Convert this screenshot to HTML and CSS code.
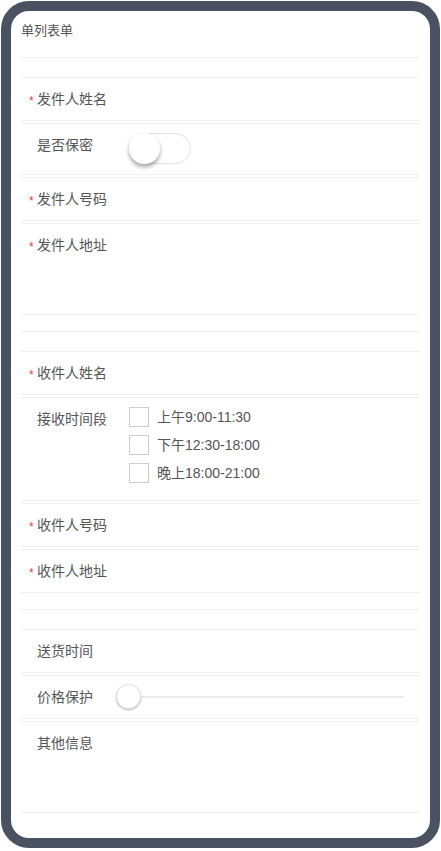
FILE: index.html
```html
<!DOCTYPE html>
<html lang="zh-CN">
<head>
<meta charset="utf-8">
<title>单列表单</title>
<link rel="stylesheet" href="styles.css">
</head>
<body>
<div class="frame">
  <div class="screen">
    <div class="title">单列表单</div>
    <div class="blank blank-lg"></div>

    <div class="item">
      <div class="label"><span class="req">*</span>发件人姓名</div>
    </div>
    <div class="item item-switch">
      <div class="label"><span class="req"></span>是否保密</div>
      <div class="control"><span class="switch"><span class="knob"></span></span></div>
    </div>
    <div class="item">
      <div class="label"><span class="req">*</span>发件人号码</div>
    </div>
    <div class="item item-area">
      <div class="label"><span class="req">*</span>发件人地址</div>
    </div>

    <div class="blank blank-sm"></div>
    <div class="blank blank-lg"></div>

    <div class="item">
      <div class="label"><span class="req">*</span>收件人姓名</div>
    </div>
    <div class="item item-check">
      <div class="label"><span class="req"></span>接收时间段</div>
      <div class="control options">
        <label class="opt"><span class="box"></span>上午9:00-11:30</label>
        <label class="opt"><span class="box"></span>下午12:30-18:00</label>
        <label class="opt"><span class="box"></span>晚上18:00-21:00</label>
      </div>
    </div>
    <div class="item">
      <div class="label"><span class="req">*</span>收件人号码</div>
    </div>
    <div class="item">
      <div class="label"><span class="req">*</span>收件人地址</div>
    </div>

    <div class="blank blank-sm"></div>
    <div class="blank blank-lg"></div>

    <div class="item">
      <div class="label"><span class="req"></span>送货时间</div>
    </div>
    <div class="item item-slider">
      <div class="label"><span class="req"></span>价格保护</div>
      <div class="slider"><span class="track"></span><span class="thumb"></span></div>
    </div>
    <div class="item item-area">
      <div class="label"><span class="req"></span>其他信息</div>
    </div>
  </div>
</div>
</body>
</html>
```
FILE: styles.css
```css
* { box-sizing: border-box; }
html, body { margin: 0; padding: 0; background: #ffffff; }
body {
  font-family: "Liberation Sans", "Noto Sans CJK SC", sans-serif;
  color: #555555;
}
.frame {
  margin: 1px;
  width: 439px;
  height: 847px;
  border: 10px solid #4a5161;
  border-radius: 28px;
  background: #ffffff;
  overflow: hidden;
}
.screen {
  padding: 0 10px;
}
.title {
  padding: 10px 0 17px;
  line-height: 19px;
  font-size: 13px;
  color: #555555;
  border-bottom: 1px solid #f0f0f0;
}
.blank { border-bottom: 1px solid #f0f0f0; }
.blank-lg { height: 20px; }
.blank-sm { height: 17px; }

.item {
  display: flex;
  align-items: flex-start;
  min-height: 43px;
  border-bottom: 1px solid #f0f0f0;
}
.item + .item {
  margin-top: 2px;
  border-top: 1px solid #f0f0f0;
  min-height: 44px;
}
.label {
  flex: 0 0 108px;
  display: flex;
  padding: 11px 0 0 8px;
  line-height: 20px;
  font-size: 14px;
  color: #555555;
}
.req {
  flex: 0 0 8px;
  color: #e8394d;
  font-size: 12px;
  line-height: 20px;
  padding-top: 2px;
}
.control { padding-top: 9px; }

.item-switch { min-height: 52px !important; }
.switch {
  display: block;
  width: 62px;
  height: 31px;
  border: 1px solid #e2e2e2;
  border-radius: 16px;
  background: #ffffff;
  position: relative;
}
.knob {
  position: absolute;
  left: -1px;
  top: -1px;
  width: 31px;
  height: 31px;
  border-radius: 50%;
  background: #ffffff;
  box-shadow: 0 3px 4px rgba(0, 0, 0, 0.35);
}

.item-area { min-height: 92px !important; }

.item-check { min-height: 104px !important; }
.options {
  display: flex;
  flex-direction: column;
  gap: 8px;
  padding-bottom: 16px;
  font-size: 14px;
}
.opt {
  display: flex;
  align-items: center;
  height: 20px;
  line-height: 20px;
  color: #555555;
}
.box {
  width: 20px;
  height: 20px;
  border: 1px solid #cccccc;
  background: #ffffff;
  margin-right: 8px;
}

.item-slider { align-items: center; }
.item-slider .label { padding-top: 0; }
.slider {
  flex: 1;
  position: relative;
  height: 26px;
  margin-right: 16px;
  display: flex;
  align-items: center;
}
.track {
  display: block;
  width: 100%;
  height: 2px;
  background: #e9e9f0;
}
.thumb {
  position: absolute;
  left: -13px;
  top: 0;
  width: 25px;
  height: 25px;
  border-radius: 50%;
  background: #ffffff;
  border: 1px solid #e4e4e4;
  box-shadow: 0 1px 2px rgba(0, 0, 0, 0.3);
}
```
